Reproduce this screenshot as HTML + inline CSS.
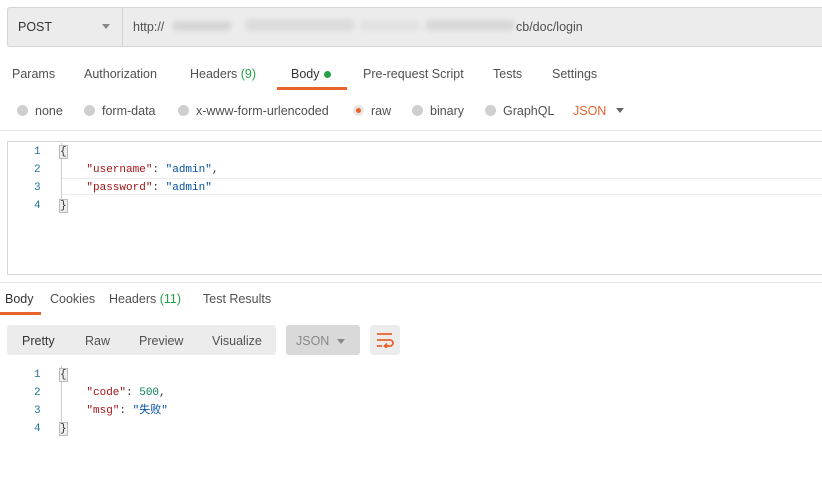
<!DOCTYPE html>
<html><head><meta charset="utf-8"><style>
*{margin:0;padding:0;box-sizing:border-box}
body{width:822px;height:486px;background:#fff;font-family:"Liberation Sans","Noto Sans CJK SC",sans-serif;font-size:12.5px;color:#505050;position:relative;overflow:hidden}
.a{position:absolute;white-space:nowrap}
.mono{font-family:"Liberation Mono","Noto Sans CJK SC",monospace;font-size:11px}
.k{color:#a31515}.s{color:#0451a5}.n{color:#098658}.ln{color:#237893}
.rad{position:absolute;width:11px;height:11px;border-radius:50%;background:#cfcfcf;top:105px}
.blur{position:absolute;background:#d6d6d6;border-radius:6px;filter:blur(2px)}
</style></head><body>
<div class="a" style="left:7px;top:7px;width:820px;height:40px;background:#ececec;border:1px solid #d4d4d4;border-radius:3px"></div>
<div class="a" style="left:122px;top:8px;width:1px;height:38px;background:#d4d4d4"></div>
<div class="a" style="left:18px;top:20px;color:#333">POST</div>
<div class="a" style="left:102px;top:24px;width:0;height:0;border-left:4px solid transparent;border-right:4px solid transparent;border-top:5px solid #888"></div>
<div class="a" style="left:133px;top:20px;color:#505050">http://</div>
<div class="blur" style="left:172px;top:21px;width:60px;height:10px"></div>
<div class="blur" style="left:245px;top:19px;width:110px;height:12px;background:#dcdcdc"></div>
<div class="blur" style="left:360px;top:20px;width:60px;height:11px;background:#e2e2e2"></div>
<div class="blur" style="left:425px;top:20px;width:90px;height:11px;background:#d9d9d9"></div>
<div class="a" style="left:516px;top:20px;color:#505050">cb/doc/login</div>
<div class="a" style="left:12px;top:67px">Params</div>
<div class="a" style="left:84px;top:67px">Authorization</div>
<div class="a" style="left:190px;top:67px">Headers <span style="color:#26a148">(9)</span></div>
<div class="a" style="left:291px;top:67px;color:#333">Body</div>
<div class="a" style="left:324px;top:71px;width:7px;height:7px;border-radius:50%;background:#26a148"></div>
<div class="a" style="left:277px;top:87px;width:70px;height:3px;background:#e8632b"></div>
<div class="a" style="left:363px;top:67px">Pre-request Script</div>
<div class="a" style="left:493px;top:67px">Tests</div>
<div class="a" style="left:552px;top:67px">Settings</div>
<div class="rad" style="left:17px"></div><div class="a" style="left:35px;top:104px">none</div>
<div class="rad" style="left:84px"></div><div class="a" style="left:102px;top:104px">form-data</div>
<div class="rad" style="left:178px"></div><div class="a" style="left:196px;top:104px">x-www-form-urlencoded</div>
<div class="rad" style="left:353px;background:#e6e6e6"></div><div class="a" style="left:356px;top:108px;width:5px;height:5px;border-radius:50%;background:#e8632b"></div>
<div class="a" style="left:371px;top:104px">raw</div>
<div class="rad" style="left:412px"></div><div class="a" style="left:430px;top:104px">binary</div>
<div class="rad" style="left:485px"></div><div class="a" style="left:503px;top:104px">GraphQL</div>
<div class="a" style="left:573px;top:104px;color:#e8632b">JSON</div>
<div class="a" style="left:616px;top:108px;border-left:4px solid transparent;border-right:4px solid transparent;border-top:5px solid #666"></div>
<div class="a" style="left:0;top:130px;width:822px;height:1px;background:#e6e6e6"></div>
<div class="a" style="left:7px;top:141px;width:820px;height:134px;border:1px solid #d6d6d6"></div>
<div class="a" style="left:62px;top:178px;width:760px;height:17px;border-top:1px solid #ececec;border-bottom:1px solid #ececec"></div>
<div class="a" style="left:61px;top:143px;width:1px;height:68px;background:#ccc"></div>
<div class="a mono ln" style="left:34px;top:143px;line-height:18px">1<br>2<br>3<br>4</div>
<div class="a mono" style="left:60px;top:143px;line-height:18px;color:#333"><span style="background:#eee;outline:1px solid #bbb">{</span><br>&nbsp;&nbsp;&nbsp;&nbsp;<span class="k">"username"</span>: <span class="s">"admin"</span>,<br>&nbsp;&nbsp;&nbsp;&nbsp;<span class="k">"password"</span>: <span class="s">"admin"</span><br><span style="background:#eee;outline:1px solid #bbb">}</span></div>
<div class="a" style="left:0;top:282px;width:822px;height:1px;background:#e6e6e6"></div>
<div class="a" style="left:5px;top:292px;color:#333">Body</div>
<div class="a" style="left:0;top:312px;width:41px;height:3px;background:#e8632b"></div>
<div class="a" style="left:50px;top:292px">Cookies</div>
<div class="a" style="left:109px;top:292px">Headers <span style="color:#26a148">(11)</span></div>
<div class="a" style="left:203px;top:292px">Test Results</div>
<div class="a" style="left:7px;top:325px;width:269px;height:30px;background:#ececec;border-radius:3px"></div>
<div class="a" style="left:22px;top:334px;color:#333">Pretty</div>
<div class="a" style="left:85px;top:334px">Raw</div>
<div class="a" style="left:139px;top:334px">Preview</div>
<div class="a" style="left:212px;top:334px">Visualize</div>
<div class="a" style="left:286px;top:325px;width:74px;height:30px;background:#d9d9d9;border-radius:3px"></div>
<div class="a" style="left:296px;top:334px;color:#888">JSON</div>
<div class="a" style="left:337px;top:339px;border-left:4px solid transparent;border-right:4px solid transparent;border-top:5px solid #888"></div>
<div class="a" style="left:370px;top:325px;width:30px;height:30px;background:#ececec;border-radius:3px"></div>
<svg class="a" style="left:376px;top:332px" width="18" height="16" viewBox="0 0 18 16"><path d="M1 2h15M1 8h13a3 3 0 0 1 0 6H9M1 14h5M11 11.5l-2.5 2.5 2.5 2" fill="none" stroke="#e8632b" stroke-width="1.8"/></svg>
<div class="a" style="left:61px;top:366px;width:1px;height:68px;background:#ccc"></div>
<div class="a mono ln" style="left:34px;top:366px;line-height:18px">1<br>2<br>3<br>4</div>
<div class="a mono" style="left:60px;top:366px;line-height:18px;color:#333"><span style="background:#eee;outline:1px solid #bbb">{</span><br>&nbsp;&nbsp;&nbsp;&nbsp;<span class="k">"code"</span>: <span class="n">500</span>,<br>&nbsp;&nbsp;&nbsp;&nbsp;<span class="k">"msg"</span>: <span class="s">"失败"</span><br><span style="background:#eee;outline:1px solid #bbb">}</span></div>
</body></html>
